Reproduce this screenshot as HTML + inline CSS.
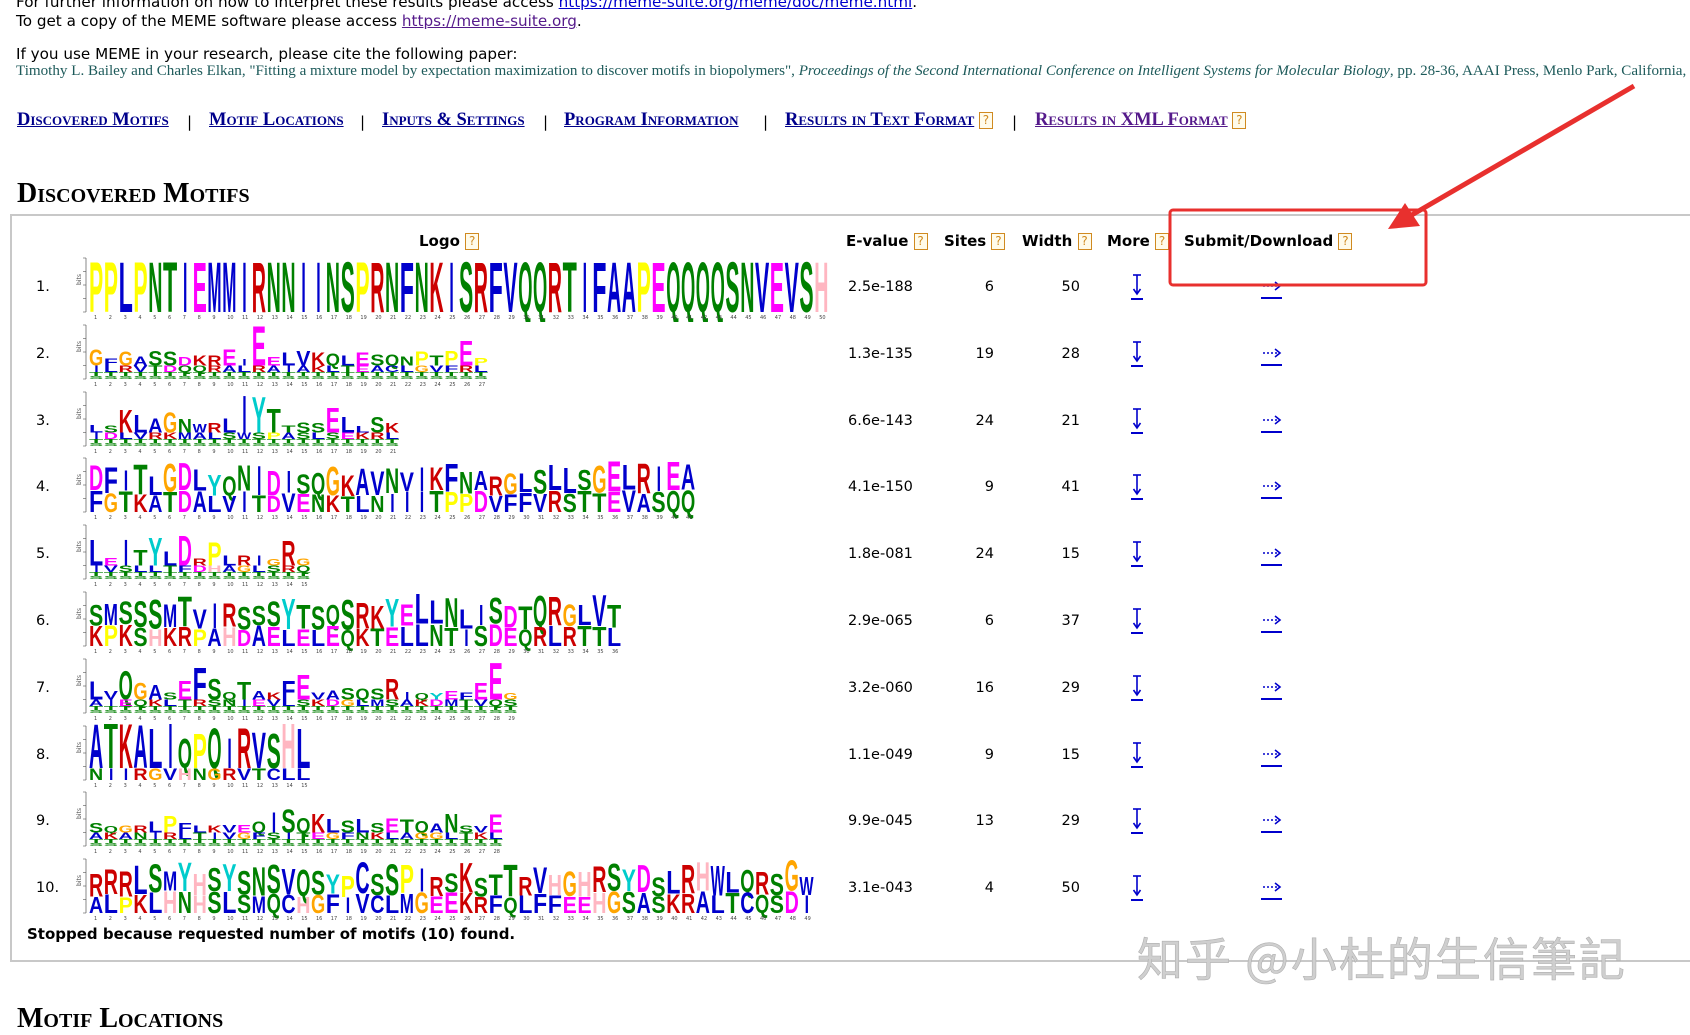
<!DOCTYPE html>
<html><head><meta charset="utf-8">
<style>
body{margin:0;width:1690px;height:1023px;overflow:hidden;background:#fff;position:relative;font-family:"DejaVu Sans",sans-serif;color:#000}
.a{position:absolute;white-space:nowrap}
.t{font-size:15.2px}
a{color:#00c;text-decoration:underline}
.nav{font-family:"Liberation Serif",serif;font-variant:small-caps;font-weight:bold;font-size:18.5px;top:110px}
.nav a{color:#00008b}
.sep{font-family:"DejaVu Sans",sans-serif;font-size:15px;top:113px}
.q{display:inline-block;width:12px;height:15px;border:1px solid #d08a20;color:#d08a20;font-size:12px;line-height:15px;text-align:center;font-weight:normal;vertical-align:1px;font-family:"DejaVu Sans",sans-serif;background:#fffbea}
.h{font-weight:bold;font-size:15px;top:232px}
.v{font-size:14.5px}
</style></head><body>
<div class="a t" style="left:16px;top:-7px">For further information on how to interpret these results please access <a>https://meme-suite.org/meme/doc/meme.html</a>.</div>
<div class="a t" style="left:16px;top:12px">To get a copy of the MEME software please access <a style="color:#551a8b">https://meme-suite.org</a>.</div>
<div class="a t" style="left:16px;top:45px">If you use MEME in your research, please cite the following paper:</div>
<div class="a" style="left:16px;top:63px;font-family:'Liberation Serif',serif;font-size:15.1px;color:#1d5a5a">Timothy L. Bailey and Charles Elkan, "Fitting a mixture model by expectation maximization to discover motifs in biopolymers", <i>Proceedings of the Second International Conference on Intelligent Systems for Molecular Biology</i>, pp. 28-36, AAAI Press, Menlo Park, California, 1994.</div>

<div class="a nav" style="left:17px"><a>Discovered Motifs</a></div>
<div class="a sep" style="left:187px">|</div>
<div class="a nav" style="left:209px"><a>Motif Locations</a></div>
<div class="a sep" style="left:360px">|</div>
<div class="a nav" style="left:382px"><a>Inputs &amp; Settings</a></div>
<div class="a sep" style="left:543px">|</div>
<div class="a nav" style="left:564px"><a>Program Information</a></div>
<div class="a sep" style="left:763px">|</div>
<div class="a nav" style="left:785px"><a>Results in Text Format</a> <span class="q">?</span></div>
<div class="a sep" style="left:1012px">|</div>
<div class="a nav" style="left:1035px"><a style="color:#551a8b">Results in XML Format</a> <span class="q">?</span></div>

<div class="a" style="left:17px;top:178px;font-family:'Liberation Serif',serif;font-variant:small-caps;font-weight:bold;font-size:28px">Discovered Motifs</div>

<div class="a" style="left:10px;top:214px;width:1700px;height:744px;border:2px solid #c8c8c8"></div>

<div class="a h" style="left:419px">Logo <span class="q">?</span></div>
<div class="a h" style="left:846px">E-value <span class="q">?</span></div>
<div class="a h" style="left:944px">Sites <span class="q">?</span></div>
<div class="a h" style="left:1022px">Width <span class="q">?</span></div>
<div class="a h" style="left:1107px">More <span class="q">?</span></div>
<div class="a h" style="left:1184px">Submit/Download <span class="q">?</span></div>

<div id="rows"></div>

<div class="a" style="left:27px;top:925px;font-weight:bold;font-size:15px">Stopped because requested number of motifs (10) found.</div>

<div class="a" style="left:1137px;top:924px;font-family:'Noto Sans CJK SC',sans-serif;font-size:46px;color:#cfcfcf;letter-spacing:2px;-webkit-text-stroke:0.6px #b0b0b0">知乎 @小杜的生信筆記</div>

<div class="a" style="left:17px;top:1003px;font-family:'Liberation Serif',serif;font-variant:small-caps;font-weight:bold;font-size:28px">Motif Locations</div>

<svg class="a" style="left:0;top:0" width="1690" height="1023">
<rect x="1170" y="210" width="256" height="75" rx="3" fill="none" stroke="#e8302e" stroke-width="3"/>
<line x1="1634" y1="86" x2="1410" y2="216" stroke="#e8302e" stroke-width="5"/>
<polygon points="1388,229 1405,203 1420,226" fill="#e8302e"/>
</svg>

<script>
var col={A:'#0000cc',C:'#0000cc',F:'#0000cc',I:'#0000cc',L:'#0000cc',V:'#0000cc',W:'#0000cc',M:'#0000cc',
N:'#008000',Q:'#008000',S:'#008000',T:'#008000',D:'#ff00ff',E:'#ff00ff',K:'#cc0000',R:'#cc0000',H:'#ffb6c1',G:'#ffa500',P:'#ffff00',Y:'#00cccc'};
var rows=[
['2.5e-188',6,50,'PPLPNTIEMMIRNNIINSPRNFNKISRFVQQRTIFAAPEQQQQSNVEVSH','',1],
['1.3e-135',19,28,'GFGASSDKREIEELVKQLESQNPTPEP','ILRVTDQQRALRAIAKLTEACLGVFRL',0],
['6.6e-143',24,21,'LSKLAGNWRLIYTTSSELLSK','IDLVRKMALSWSPASLSEKRL',0],
['4.1e-150',9,41,'DFITLGDLYQNIDISQGKAVNVIKFNARGLSLLSGELRIEA','FGTKATDALVITDVENKTLNIIITPPDVFFVRSTTEVASQQ',2],
['1.8e-081',24,15,'LEITYLDRPLRIGRG','IVSLLTFDHAGLSRQ',0],
['2.9e-065',6,37,'SMSSSMTVIRSSSYTSQSRKYELLNLISDTQRGLVT','KPKSHKRPAHDAELELEQKTELLNTISDEQRLRTT',2],
['3.2e-060',16,29,'LVQGASEFSQTAKFEVASQSRIQYEFEEG','AIEQKLTRSNIEVLSKDGLMSAKDMTVQS',0],
['1.1e-049',9,15,'ATKALIQPQIRVSHL','NIIRGVHNGRVTCLL',3],
['9.9e-045',13,29,'SQGRLPFLKVEQISQKLSLSETQANSVE','AKANIRLTIVGFSITEGFNKLAGGLTK',0],
['3.1e-043',4,50,'RRRLSMYHSYSNSVQSYPCSSPIRSKSTTRVHGHRSYDSLRHWLQRSGW','ALPKLHNHSLSMQCHGFIVCLMGEEKRFQLFFEEHGSASKRALTCQSDI',2]];
var seed=7;function rnd(){seed=(seed*9301+49297)%233280;return seed/233280;}
var out='';
rows.forEach(function(r,i){
 var cy=288+i*66.8;
 out+='<div class="a v" style="left:36px;top:'+(cy-9)+'px">'+(i+1)+'.</div>';
 out+='<div class="a v" style="left:848px;top:'+(cy-9)+'px">'+r[0]+'</div>';
 out+='<div class="a v" style="left:954px;width:40px;text-align:right;top:'+(cy-9)+'px">'+r[1]+'</div>';
 out+='<div class="a v" style="left:1040px;width:40px;text-align:right;top:'+(cy-9)+'px">'+r[2]+'</div>';
 var top=cy-30,bot=cy+24,H=bot-top,w=14.8,n=r[3].length;
 var s='<svg class="a" style="left:76px;top:'+(top-2)+'px" width="'+(16+n*w)+'" height="'+(H+12)+'">';
 s+='<line x1="10" y1="2" x2="10" y2="'+(H+2)+'" stroke="#555" stroke-width="0.7"/>';
 for(var k=0;k<5;k++){var yy=2+k*H/4;s+='<line x1="7" y1="'+yy+'" x2="10" y2="'+yy+'" stroke="#555" stroke-width="0.6"/>';}
 s+='<text x="3" y="'+(H/2+4)+'" font-size="6" fill="#555" transform="rotate(-90 3 '+(H/2+2)+')">bits</text>';
 for(var j=0;j<n;j++){
  var x=13+j*w, c=r[3][j], yb=H+2;
  var mode=r[5];
  var letters=[];
  if(mode==1){letters=[[c,H*0.95]];}
  else if(mode==2){letters=[[c,H*(0.35+rnd()*0.25)],[r[4][j]||'L',H*(0.3+rnd()*0.12)]];}
  else if(mode==3){var hh=H*(0.55+rnd()*0.35);letters=[[c,hh],[r[4][j]||'L',H*0.22]];}
  else{var hh=H*(0.12+rnd()*rnd()*0.7);letters=[[c,hh],[r[4][j]||'L',H*0.12],['T',H*0.07],['S',H*0.06]];}
  var tot=0;letters.forEach(function(l){tot+=l[1];});
  var y=yb-tot;
  letters.forEach(function(l){
   var lc=l[0],lh=l[1];y+=lh;
   var tl=w-0.6,xx=x;
   if(lc=='I'){tl=w*0.3;xx=x+w*0.35;}
   s+='<text x="0" y="0" font-family="Liberation Sans" font-weight="bold" font-size="10" fill="'+(col[lc]||'#0000cc')+'" textLength="'+tl.toFixed(1)+'" lengthAdjust="spacingAndGlyphs" transform="translate('+xx.toFixed(1)+','+y.toFixed(1)+') scale(1,'+(lh/7.2).toFixed(3)+')">'+lc+'</text>';
  });
  s+='<text x="'+(x+5)+'" y="'+(H+9)+'" font-size="5" fill="#444">'+(j+1)+'</text>';
 }
 s+='</svg>';
 out+=s;
 out+='<svg class="a" style="left:1130px;top:'+(cy-16)+'px" width="16" height="30"><line x1="7" y1="3" x2="7" y2="22" stroke="#00c" stroke-width="1.6"/><line x1="3" y1="3" x2="11" y2="3" stroke="#00c" stroke-width="1.6"/><polyline points="3.5,17 7,22 10.5,17" fill="none" stroke="#00c" stroke-width="1.6"/><line x1="1" y1="27" x2="13" y2="27" stroke="#00c" stroke-width="2"/></svg>';
 out+='<svg class="a" style="left:1260px;top:'+(cy-12)+'px" width="24" height="26"><line x1="3" y1="10" x2="18" y2="10" stroke="#00c" stroke-width="1.6" stroke-dasharray="2,2"/><polyline points="15,6 20,10 15,14" fill="none" stroke="#00c" stroke-width="1.6"/><line x1="1" y1="22" x2="22" y2="22" stroke="#00c" stroke-width="2"/></svg>';
});
document.getElementById('rows').innerHTML=out;
</script>
</body></html>
